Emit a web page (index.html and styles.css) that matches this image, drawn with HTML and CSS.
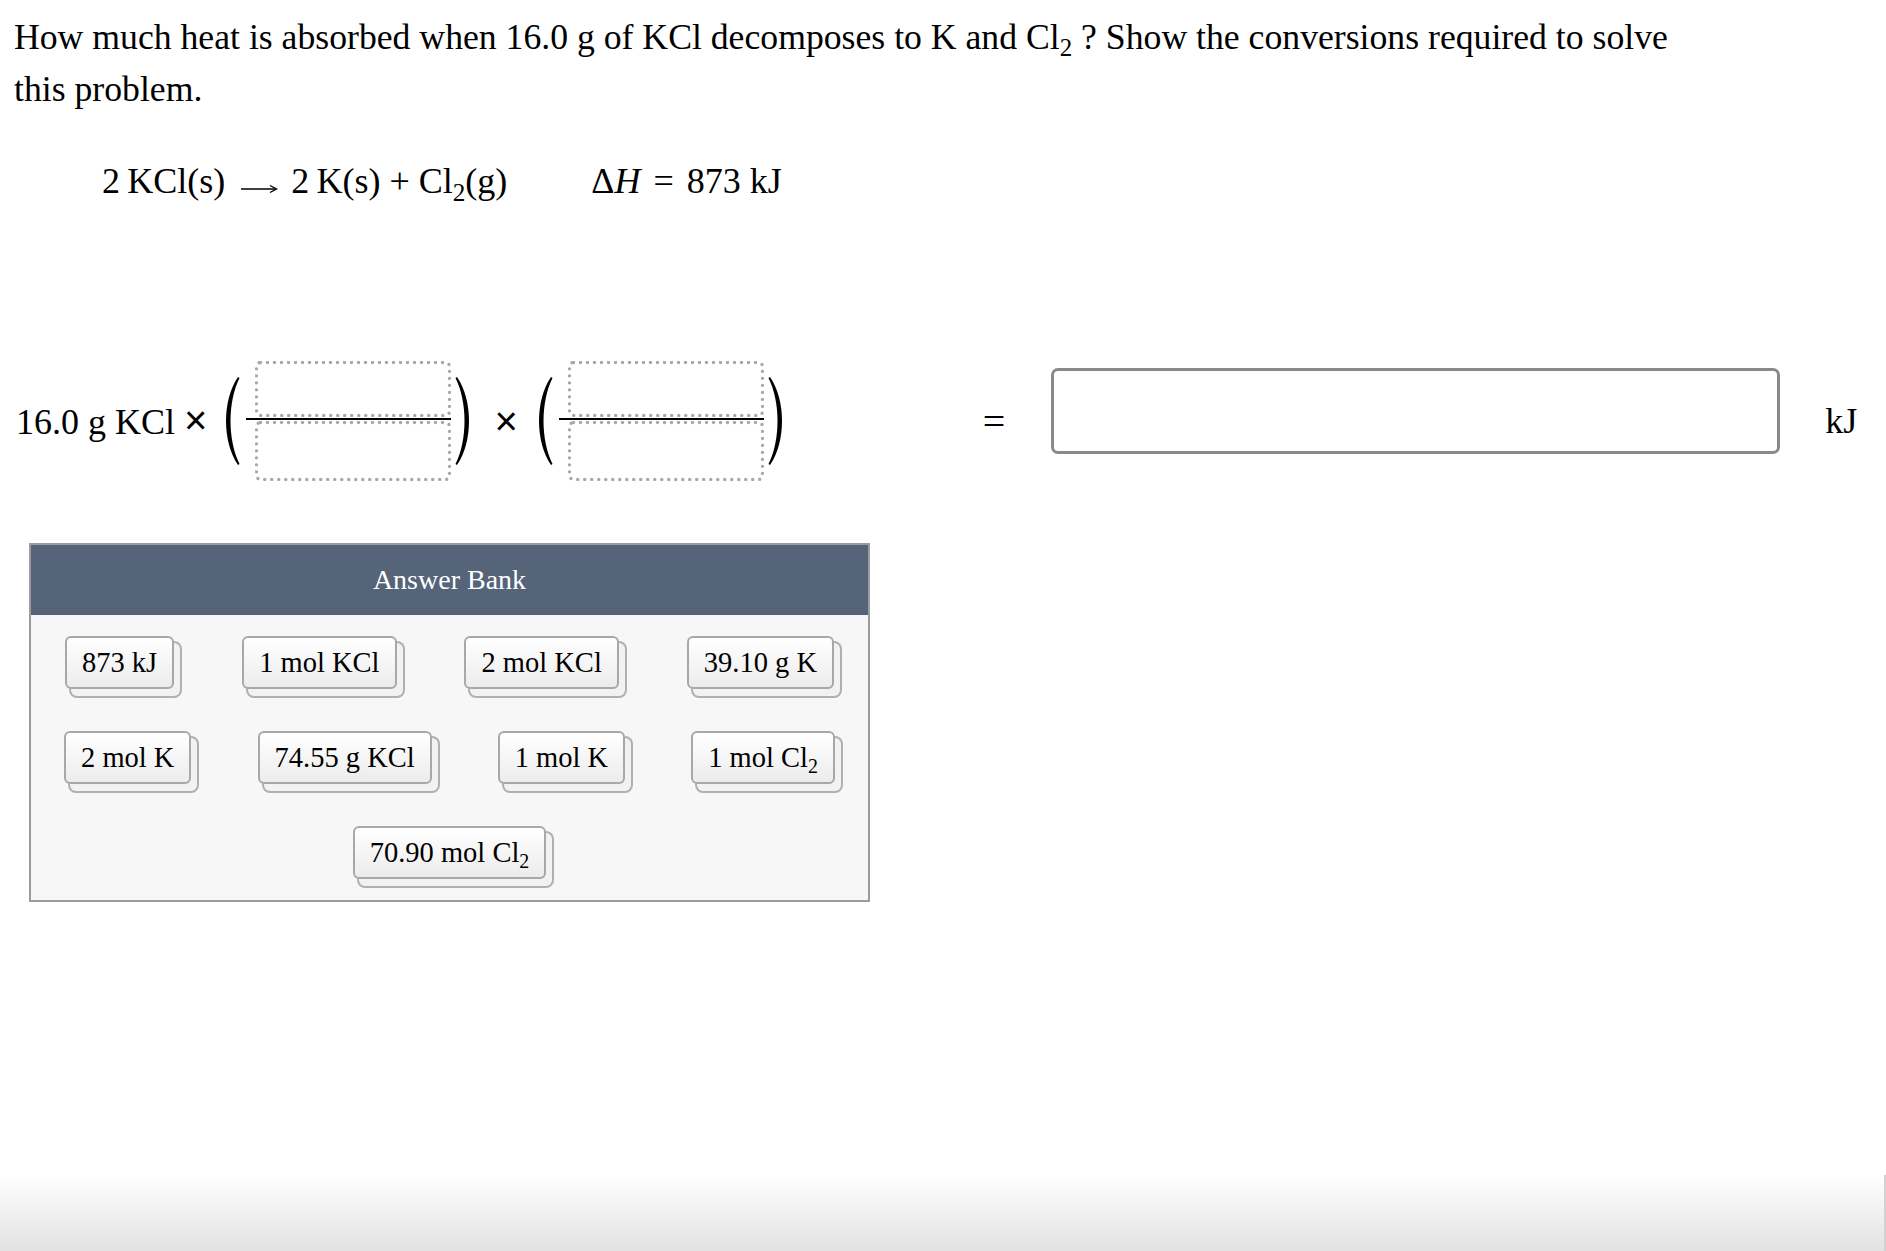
FILE: index.html
```html
<!DOCTYPE html>
<html lang="en">
<head>
  <meta charset="UTF-8" />
  <title>Heat Absorbed by KCl Decomposition</title>
  <link rel="stylesheet" href="styles.css">
</head>
<body>

  <p class="question">
    How much heat is absorbed when 16.0 g of KCl decomposes to K and Cl<sub>2</sub> ? Show the conversions required to solve this problem.
  </p>

  <div class="reaction">
    <span class="eq">2&#8201;KCl(s)
      <svg class="arrow" width="38" height="12" viewBox="0 0 38 12">
        <line x1="1" y1="6" x2="35" y2="6" stroke="#000" stroke-width="1.6" />
        <path d="M30 2.5 L36.5 6 L30 9.5" fill="none" stroke="#000" stroke-width="1.4" />
      </svg>
      2&#8201;K(s) + Cl<sub>2</sub>(g)</span>
    <span class="dh">&Delta;<i>H</i><span class="op">=</span>873 kJ</span>
  </div>

  <div class="setup">
    <span class="given">16.0 g KCl <span class="mult">&times;</span></span>

    <svg class="paren" width="20" height="90" viewBox="0 0 20 90">
      <path d="M17 1 C1 24 1 66 17 89 L18.5 88 C6.5 64 6.5 26 18.5 2 Z" />
    </svg>
    <div class="fraction">
      <svg class="slot" width="196" height="56">
        <rect x="1.5" y="1.5" width="193" height="53" rx="4" />
      </svg>
      <div class="bar"></div>
      <svg class="slot" width="196" height="60">
        <rect x="1.5" y="1.5" width="193" height="57" rx="4" />
      </svg>
    </div>
    <svg class="paren right" width="20" height="90" viewBox="0 0 20 90">
      <path d="M17 1 C1 24 1 66 17 89 L18.5 88 C6.5 64 6.5 26 18.5 2 Z" />
    </svg>

    <span class="mult times">&times;</span>

    <svg class="paren" width="20" height="90" viewBox="0 0 20 90">
      <path d="M17 1 C1 24 1 66 17 89 L18.5 88 C6.5 64 6.5 26 18.5 2 Z" />
    </svg>
    <div class="fraction">
      <svg class="slot" width="196" height="56">
        <rect x="1.5" y="1.5" width="193" height="53" rx="4" />
      </svg>
      <div class="bar"></div>
      <svg class="slot" width="196" height="60">
        <rect x="1.5" y="1.5" width="193" height="57" rx="4" />
      </svg>
    </div>
    <svg class="paren right" width="20" height="90" viewBox="0 0 20 90">
      <path d="M17 1 C1 24 1 66 17 89 L18.5 88 C6.5 64 6.5 26 18.5 2 Z" />
    </svg>

    <span class="equals">=</span>
    <div class="answer-box"></div>
    <span class="unit">kJ</span>
  </div>

  <div class="bank">
    <div class="bank-title">Answer Bank</div>
    <div class="bank-tiles">
      <div class="tile">873 kJ</div>
      <div class="tile">1 mol KCl</div>
      <div class="tile">2 mol KCl</div>
      <div class="tile">39.10 g K</div>
      <div class="tile">2 mol K</div>
      <div class="tile">74.55 g KCl</div>
      <div class="tile">1 mol K</div>
      <div class="tile">1 mol Cl<sub>2</sub></div>
      <div class="tile">70.90 mol Cl<sub>2</sub></div>
    </div>
  </div>

  <div class="page-fade"></div>

</body>
</html>
```

FILE: styles.css
```css
body {
  margin: 0;
  font-family: 'Liberation Serif', 'Times New Roman', serif;
  font-size: 36px;
  color: #000;
  background: #fff;
  overflow: hidden;
}

sub {
  font-size: 0.7em;
  line-height: 0;
  vertical-align: -0.3em;
}

.question {
  margin: 11px 0 0 14px;
  max-width: 1700px;
  font-size: 35.7px;
  line-height: 52px;
}

.reaction {
  display: flex;
  margin: 40px 0 0 102px;
  line-height: 52px;
}

.arrow {
  margin: 0 4px 0 6px;
  vertical-align: -2px;
}

.dh {
  margin-left: 84px;
}

.dh .op {
  margin: 0 13px;
}

.setup {
  display: flex;
  align-items: center;
  margin: 154px 0 0 16px;
}

.mult {
  font-family: 'Liberation Sans', Arial, sans-serif;
  font-size: 40px;
  line-height: 1;
}

.paren {
  margin-left: 14px;
}

.paren.right {
  transform: scaleX(-1);
  margin-left: 3px;
}

.fraction {
  display: flex;
  flex-direction: column;
  align-items: flex-end;
  width: 205px;
  margin-left: 5px;
}

/* dotted drop slot, round dots like the original widget */
.slot rect {
  fill: none;
  stroke: #a8a8a8;
  stroke-width: 3.4;
  stroke-linecap: round;
  stroke-dasharray: 0 7;
}

.bar {
  width: 100%;
  height: 2px;
  margin: 1px 0;
  background: #000;
}

.times {
  margin-left: 20px;
  margin-right: 2px;
}

.equals {
  margin-left: 196px;
  font-size: 40px;
}

.answer-box {
  width: 729px;
  height: 86px;
  box-sizing: border-box;
  margin: 0 0 20px 46px;
  border: 3px solid #8a8a8a;
  border-radius: 7px;
}

.unit {
  margin-left: 45px;
}

.bank {
  width: 841px;
  box-sizing: border-box;
  margin: 62px 0 0 29px;
  border: 2px solid #9c9c9c;
  background: #f7f7f7;
}

.bank-title {
  height: 70px;
  line-height: 70px;
  text-align: center;
  font-size: 28px;
  color: #fff;
  background: #556479;
}

.bank-tiles {
  display: flex;
  flex-wrap: wrap;
  justify-content: space-around;
}

.tile {
  height: 53px;
  box-sizing: border-box;
  margin: 21px 20px;
  padding: 0 15px;
  font-size: 28.5px;
  line-height: 49px;
  border: 2px solid #a8a8a8;
  border-radius: 6px;
  background: linear-gradient(#ffffff, #ececec);
  box-shadow: 6px 7px 0 0 #f2f2f2, 6px 7px 0 2px #b0b0b0;
}

.page-fade {
  position: fixed;
  left: 0;
  right: 0;
  bottom: 0;
  height: 76px;
  border-right: 2px solid #d2d2d2;
  background: linear-gradient(rgba(255, 255, 255, 0), #e2e2e2);
  pointer-events: none;
}
```
